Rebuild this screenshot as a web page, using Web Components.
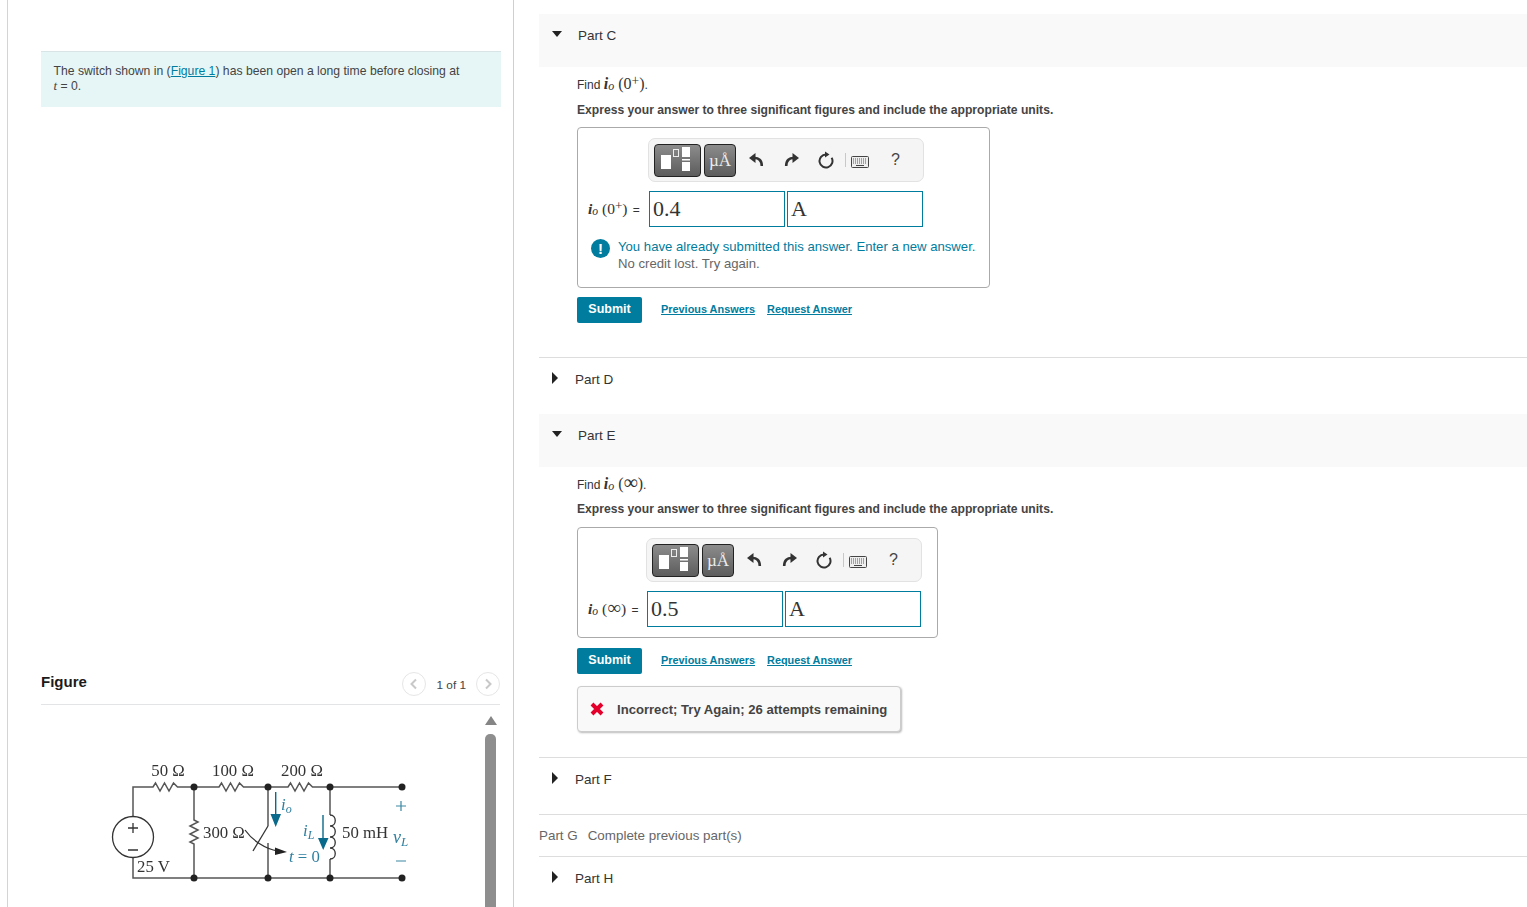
<!DOCTYPE html>
<html>
<head>
<meta charset="utf-8">
<title>Part C</title>
<style>
    html, body {
        margin: 0;
        padding: 0;
        height: 907px;
        overflow: hidden;
        background: #fff;
        font-family: "Liberation Sans", Arial, sans-serif;
        color: #333;
    }
    .page {
        display: flex;
        height: 907px;
    }
</style>
</head>
<body>
<div class="page">
    <left-pane></left-pane>
    <right-pane>
        <part-section label="Part C" style="--body-top:5px">
            <find-line><math-expr base="i" sub="o" arg="0" sup="+"></math-expr>.</find-line>
            <answer-box label-width="61px" arg="0" sup="+" value="0.4" units="A" style="--box-width:413px">
                <feedback-note></feedback-note>
            </answer-box>
            <submit-row style="--row-top:9px;--row-bottom:34px"></submit-row>
        </part-section>
        <collapsed-part label="Part D"></collapsed-part>
        <part-section label="Part E" style="--body-top:4px;--find-h:26px;--hint-top:3px">
            <find-line><math-expr base="i" sub="o" arg="∞"></math-expr>.</find-line>
            <answer-box label-width="59px" arg="∞" value="0.5" units="A" style="--box-width:361px;--box-bottom:10px;--box-top:10px"></answer-box>
            <submit-row style="--row-top:10px;--row-bottom:12px"></submit-row>
            <result-note>Incorrect; Try Again; 26 attempts remaining</result-note>
        </part-section>
        <collapsed-part label="Part F"></collapsed-part>
        <locked-part label="Part G">Complete previous part(s)</locked-part>
        <collapsed-part label="Part H"></collapsed-part>
    </right-pane>
</div>

<script>
class LeftPane extends HTMLElement {
    constructor() {
        super();
        this.attachShadow({ mode: "open" }).innerHTML = `
        <style>
            :host {
                display: block;
                box-sizing: border-box;
                width: 507px;
                height: 907px;
                margin-left: 7px;
                border-left: 1px solid #d4d4d4;
                border-right: 1px solid #cfcfcf;
                overflow: hidden;
                flex: none;
            }
            .intro {
                margin: 51px 12px 0 33px;
                height: 56px;
                box-sizing: border-box;
                padding: 12px 12px 0 12.5px;
                background: #e6f6f7;
                border-top: 1px solid #d9e4e6;
                font-size: 12.2px;
                line-height: 15px;
                color: #444;
            }
            .intro a {
                color: #007c9e;
            }
            .intro i {
                font-family: "Liberation Serif", serif;
                font-size: 13px;
                line-height: 10px;
            }
            figure-panel {
                margin-top: 560px;
            }
        </style>
        <div class="intro">The switch shown in (<a href="#">Figure 1</a>) has been open a long time before closing at<br><i>t</i> = 0.</div>
        <figure-panel></figure-panel>`;
    }
}

class FigurePanel extends HTMLElement {
    constructor() {
        super();
        this.attachShadow({ mode: "open" }).innerHTML = `
        <style>
            :host {
                display: block;
                box-sizing: border-box;
                height: 240px;
                padding: 0 13px 0 33px;
                border-right: 1px solid #bcd0e4;
                margin-right: -1px;
            }
            .head {
                display: flex;
                align-items: center;
                height: 37px;
                border-bottom: 1px solid #e2e4e6;
            }
            h2 {
                flex: 1;
                margin: -7px 0 0;
                font-size: 15px;
                line-height: 20px;
                color: #1b1b1b;
            }
            .count {
                font-size: 11.8px;
                color: #444;
                margin: 0 10px;
                position: relative;
                top: -1px;
            }
            .pager {
                box-sizing: border-box;
                width: 24px;
                height: 24px;
                border: 1px solid #e6e6e6;
                border-radius: 50%;
                display: flex;
                align-items: center;
                justify-content: center;
                position: relative;
                top: -2px;
            }
            .pager svg {
                width: 10px;
                height: 12px;
            }
            .body {
                display: flex;
                justify-content: space-between;
            }
            .circuit {
                margin: 45px 0 0 59px;
                width: 320px;
                height: 150px;
                filter: blur(.3px);
            }
            .scroll {
                width: 13px;
                margin-right: 3px;
                display: flex;
                flex-direction: column;
                align-items: center;
            }
            .arrow {
                width: 0;
                height: 0;
                margin-top: 11px;
                border: 6.5px solid transparent;
                border-top: 0;
                border-bottom: 9px solid #858585;
            }
            .thumb {
                width: 11px;
                height: 300px;
                margin-top: 9px;
                border-radius: 5px;
                background: #8e8e8e;
            }
            text {
                font-family: "Liberation Serif", serif;
                font-size: 16.8px;
                fill: #333;
            }
            text.teal {
                fill: #2f7f9f;
            }
            .wire {
                fill: none;
                stroke: #555;
                stroke-width: 1.5;
            }
            .dark {
                fill: none;
                stroke: #333;
                stroke-width: 1.3;
            }
            .dot {
                fill: #222;
            }
            .tealfill {
                fill: #0a6a8c;
            }
            .tealline {
                stroke: #0a6a8c;
                stroke-width: 1.4;
            }
        </style>
        <div class="head">
            <h2>Figure</h2>
            <span class="pager"><svg viewBox="0 0 10 12"><path d="M7 1.500 2.500 6 7 10.500" fill="none" stroke="#c8c8c8" stroke-width="2"/></svg></span>
            <span class="count">1 of 1</span>
            <span class="pager"><svg viewBox="0 0 10 12"><path d="M3 1.500 7.500 6 3 10.500" fill="none" stroke="#c8c8c8" stroke-width="2"/></svg></span>
        </div>
        <div class="body">
            <svg class="circuit" viewBox="0 0 320 150">
                <path class="wire" d="M33 66V37H53l2.500-4 4.500 8 4.500-8 4.500 8 4.500-8 4 4H94M94 37H119l2.500-4 4.500 8 4.500-8 4.500 8 4.500-8 4 4H168M168 37H188l2.500-4 4.500 8 4.500-8 4.500 8 4.500-8 4 4H302"/>
                <path class="wire" d="M33 108V128H302M94 37V70l4 2-8 4 8 4-8 4 8 4-8 4 4 2V128M168 37V76M168 93V128M230 37V65M230 109V128"/>
                <circle class="dark" cx="33" cy="87" r="20.500"/>
                <path class="dark" d="M28 78H38M33 73V83M28 100H38"/>
                <path class="dark" d="M230 65c7 0 7 11 0 11 7 0 7 11 0 11 7 0 7 11 0 11 7 0 7 11 0 11"/>
                <path class="dark" d="M168 76 153 101"/>
                <path class="dark" d="M145 80C152 90 165 99 178 101"/>
                <path class="dot" d="M175 97.500 187 102 175 105z"/>
                <path class="tealline" d="M175.700 42V66M223 65V90"/>
                <path class="tealfill" d="M170.500 64H181L175.700 77zM218 88H228.500L223.200 100z"/>
                <g class="dot">
                    <circle cx="94" cy="37" r="3.500"/><circle cx="168" cy="37" r="3.500"/><circle cx="230" cy="37" r="3.500"/><circle cx="302" cy="37" r="3.500"/>
                    <circle cx="94" cy="128" r="3.500"/><circle cx="168" cy="128" r="3.500"/><circle cx="230" cy="128" r="3.500"/><circle cx="302" cy="128" r="3.500"/>
                </g>
                <text x="68" y="26" text-anchor="middle">50 Ω</text>
                <text x="133" y="26" text-anchor="middle">100 Ω</text>
                <text x="202" y="26" text-anchor="middle">200 Ω</text>
                <text x="103" y="88">300 Ω</text>
                <text x="37" y="122">25 V</text>
                <text x="242" y="88">50 mH</text>
                <text class="teal" x="189" y="112"><tspan font-style="italic">t</tspan> = 0</text>
                <text class="teal" x="181" y="60" font-style="italic">i<tspan font-size="12" dy="3">o</tspan></text>
                <text class="teal" x="203" y="86" font-style="italic">i<tspan font-size="12" dy="3">L</tspan></text>
                <text class="teal" x="293" y="93" font-style="italic" style="font-size:18px">v<tspan style="font-size:13px" dy="3">L</tspan></text>
                <path class="tealline" d="M296 56H306M301 51V61M296 111H306" style="stroke-width:1.200;stroke:#3c87a3"/>
            </svg>
            <div class="scroll">
                <div class="arrow"></div>
                <div class="thumb"></div>
            </div>
        </div>`;
    }
}

class RightPane extends HTMLElement {
    constructor() {
        super();
        this.attachShadow({ mode: "open" }).innerHTML = `
        <style>
            :host {
                display: block;
                flex: 1;
                min-width: 0;
                padding: 14px 0 0 25px;
                height: 907px;
                box-sizing: border-box;
                overflow: hidden;
            }
        </style>
        <slot></slot>`;
    }
}

class PartSection extends HTMLElement {
    constructor() {
        super();
        this.attachShadow({ mode: "open" }).innerHTML = `
        <style>
            :host {
                display: block;
            }
            .head {
                height: 53px;
                background: #f9f9f9;
                box-sizing: border-box;
                display: flex;
                align-items: flex-start;
                padding: 14px 0 0 13px;
                font-size: 13.5px;
                line-height: 16px;
                color: #333;
            }
            .caret {
                width: 0;
                height: 0;
                margin: 3px 16px 0 0;
                border: 5px solid transparent;
                border-bottom: 0;
                border-top: 6px solid #222;
            }
            .body {
                padding: var(--body-top, 6px) 0 0 38px;
            }
        </style>
        <div class="head"><span class="caret"></span><span class="name"></span></div>
        <div class="body"><slot></slot></div>`;
    }

    connectedCallback() {
        this.shadowRoot.querySelector(".name").textContent = this.getAttribute("label");
    }
}

class MathExpr extends HTMLElement {
    constructor() {
        super();
        this.attachShadow({ mode: "open" });
    }

    connectedCallback() {
        const sup = this.getAttribute("sup");
        const arg = this.getAttribute("arg");
        this.shadowRoot.innerHTML = `
        <style>
            :host {
                display: inline;
                font-family: "Liberation Serif", serif;
                font-size: var(--math-size, 16px);
                color: #333;
            }
            i {
                font-weight: bold;
            }
            .sb, .sp {
                line-height: 0;
            }
            .sb {
                font-size: 75%;
                font-weight: normal;
                vertical-align: -1px;
            }
            .sp {
                font-size: 85%;
                vertical-align: 4px;
            }
            .wide {
                font-size: 125%;
                line-height: 0;
            }
        </style>
        <i>${this.getAttribute("base")}<span class="sb">${this.getAttribute("sub")}</span></i> (<span class="${arg === "∞" ? "wide" : ""}">${arg}</span>${sup ? `<span class="sp">${sup}</span>` : ""})`;
    }
}

class FindLine extends HTMLElement {
    constructor() {
        super();
        this.attachShadow({ mode: "open" }).innerHTML = `
        <style>
            :host {
                display: block;
                font-size: 12px;
                line-height: var(--find-h, 24px);
                color: #333;
            }
            .hint {
                margin-top: var(--hint-top, 5px);
                font-weight: bold;
                font-size: 12.15px;
                line-height: 16px;
                color: #444;
            }
        </style>
        Find <slot></slot>
        <div class="hint">Express your answer to three significant figures and include the appropriate units.</div>`;
    }
}

class MathToolbar extends HTMLElement {
    constructor() {
        super();
        this.attachShadow({ mode: "open" }).innerHTML = `
        <style>
            :host {
                display: flex;
                align-items: center;
                box-sizing: border-box;
                width: 276px;
                height: 44px;
                margin-left: -1px;
                padding: 0 0 0 5px;
                background: #f5f5f5;
                border: 1px solid #e2e2e2;
                border-radius: 7px;
            }
            .btn {
                box-sizing: border-box;
                height: 33px;
                border: 1px solid #222;
                border-radius: 4px;
                background: linear-gradient(#8c8c8c, #5c5c5c);
                flex: none;
            }
            .tpl {
                width: 47px;
                margin-right: 3px;
            }
            .tpl svg {
                display: block;
            }
            .units {
                width: 32px;
                color: #ececec;
                font: 17px/31px "Liberation Serif", serif;
                text-align: center;
            }
            .tool {
                flex: none;
                display: block;
            }
            .qm {
                margin-left: 22px;
                font-size: 16px;
                color: #444;
            }
        </style>
        <div class="btn tpl">
            <svg width="45" height="31" viewBox="0 0 45 31">
                <rect x="6" y="10" width="10" height="14" fill="#fff"/>
                <rect x="18.500" y="4.500" width="5" height="7" fill="none" stroke="#eee"/>
                <rect x="27" y="2" width="8" height="10" fill="#fff"/>
                <rect x="27" y="14" width="8" height="1.500" fill="#fff"/>
                <rect x="27" y="17" width="8" height="9" fill="#fff"/>
            </svg>
        </div>
        <div class="btn units">µÅ</div>
        <svg class="tool" style="margin-left:12px" width="16" height="16" viewBox="0 0 16 16"><path d="M7.500 1 1 6 7.500 11z" fill="#333"/><path d="M6 6C10.500 5.800 13.800 8 13.800 14" fill="none" stroke="#333" stroke-width="2.600"/></svg>
        <svg class="tool" style="margin-left:20px" width="16" height="16" viewBox="0 0 16 16"><path d="M8.500 1 15 6 8.500 11z" fill="#333"/><path d="M10 6C5.500 5.800 2.200 8 2.200 14" fill="none" stroke="#333" stroke-width="2.600"/></svg>
        <svg class="tool" style="margin-left:17px" width="18" height="18" viewBox="0 0 18 18"><path d="M9 3.500A6.500 6.500 0 1 0 14.600 6.700" fill="none" stroke="#333" stroke-width="2"/><path d="M8 .5 12.500 3.500 8 6.500z" fill="#333"/></svg>
        <svg class="tool" style="margin-left:10px" width="1" height="14" viewBox="0 0 1 14"><rect width="1" height="14" fill="#c8c8c8"/></svg>
        <svg class="tool" style="margin:3px 0 0 5px" width="18" height="12" viewBox="0 0 18 12"><rect x=".5" y=".5" width="17" height="11" rx="1" fill="#eee" stroke="#444"/><path d="M2 3H16M2 5H16M2 7H16" stroke="#555" stroke-dasharray="1 1" fill="none"/><path d="M5 9.500H13" stroke="#444"/></svg>
        <span class="qm">?</span>`;
    }
}

class AnswerBox extends HTMLElement {
    constructor() {
        super();
        this.attachShadow({ mode: "open" });
    }

    connectedCallback() {
        const sup = this.getAttribute("sup") || "";
        this.shadowRoot.innerHTML = `
        <style>
            :host {
                display: block;
                box-sizing: border-box;
                width: var(--box-width, 413px);
                margin-top: var(--box-top, 9px);
                padding: 10px 10px var(--box-bottom, 15px);
                border: 1px solid #aaa;
                border-radius: 4px;
                --math-size: 15.5px;
            }
            .grid {
                display: grid;
                grid-template-columns: ${this.getAttribute("label-width")} auto;
                row-gap: 9px;
                justify-content: start;
            }
            .label {
                align-self: center;
                font-size: 12px;
                white-space: nowrap;
            }
            .eq {
                margin-left: 2px;
            }
            .inputs {
                display: flex;
                gap: 2px;
            }
            .inputs div {
                box-sizing: border-box;
                width: 136px;
                height: 36px;
                border: 1px solid #007c9e;
                padding-left: 3px;
                font: 22px/34px "Liberation Serif", serif;
                color: #333;
            }
        </style>
        <div class="grid">
            <span></span>
            <math-toolbar></math-toolbar>
            <span class="label"><math-expr base="i" sub="o" arg="${this.getAttribute("arg")}" sup="${sup}"></math-expr> <span class="eq">=</span></span>
            <div class="inputs"><div>${this.getAttribute("value")}</div><div>${this.getAttribute("units")}</div></div>
        </div>
        <slot></slot>`;
    }
}

class FeedbackNote extends HTMLElement {
    constructor() {
        super();
        this.attachShadow({ mode: "open" }).innerHTML = `
        <style>
            :host {
                display: flex;
                margin: 11px 0 0 3px;
                font-size: 13.15px;
                line-height: 17px;
                color: #666;
            }
            .icon {
                flex: none;
                box-sizing: border-box;
                width: 19px;
                height: 19px;
                margin: 1px 8px 0 0;
                border-radius: 50%;
                background: #007c9e;
                color: #fff;
                font-size: 15px;
                line-height: 19px;
                font-weight: bold;
                text-align: center;
            }
            .msg {
                color: #007c9e;
                display: block;
            }
        </style>
        <span class="icon">!</span>
        <span><span class="msg">You have already submitted this answer. Enter a new answer.</span>No credit lost. Try again.</span>`;
    }
}

class SubmitRow extends HTMLElement {
    constructor() {
        super();
        this.attachShadow({ mode: "open" }).innerHTML = `
        <style>
            :host {
                display: flex;
                align-items: center;
                margin: var(--row-top, 9px) 0 var(--row-bottom, 34px);
            }
            button {
                box-sizing: border-box;
                width: 65px;
                height: 26px;
                padding: 0 0 2px;
                border: 0;
                border-radius: 2px;
                background: #007c9e;
                color: #fff;
                font: bold 12.5px "Liberation Sans", sans-serif;
            }
            a {
                font-size: 10.9px;
                font-weight: bold;
                color: #007c9e;
                margin-bottom: 2px;
            }
            a.prev {
                margin: 0 12px 2px 19px;
            }
        </style>
        <button type="button">Submit</button>
        <a class="prev" href="#">Previous Answers</a>
        <a href="#">Request Answer</a>`;
    }
}

class ResultNote extends HTMLElement {
    constructor() {
        super();
        this.attachShadow({ mode: "open" }).innerHTML = `
        <style>
            :host {
                display: flex;
                align-items: center;
                box-sizing: border-box;
                width: 324px;
                height: 46px;
                margin-bottom: 25px;
                padding-left: 12px;
                background: #f9f9f9;
                border: 1px solid #ccc;
                border-radius: 4px;
                box-shadow: 1px 1px 2px #bbb;
                font-size: 13.1px;
                font-weight: bold;
                color: #444;
            }
            svg {
                flex: none;
                margin-right: 13px;
            }
        </style>
        <svg width="14" height="14" viewBox="0 0 14 14"><path d="M2 2 12 12M12 2 2 12" stroke="#e4002b" stroke-width="4"/></svg>
        <slot></slot>`;
    }
}

class CollapsedPart extends HTMLElement {
    constructor() {
        super();
        this.attachShadow({ mode: "open" }).innerHTML = `
        <style>
            :host {
                display: block;
                box-sizing: border-box;
                height: 57px;
                border-top: 1px solid #ddd;
                padding: 14px 0 0 13px;
                font-size: 13.5px;
                line-height: 16px;
                color: #333;
            }
            .row {
                display: flex;
                align-items: flex-start;
            }
            .caret {
                width: 0;
                height: 0;
                margin: 0 17px 0 0;
                border: 6px solid transparent;
                border-right: 0;
                border-left: 6px solid #222;
            }
        </style>
        <div class="row"><span class="caret"></span><span class="name"></span></div>`;
    }

    connectedCallback() {
        this.shadowRoot.querySelector(".name").textContent = this.getAttribute("label");
    }
}

class LockedPart extends HTMLElement {
    constructor() {
        super();
        this.attachShadow({ mode: "open" }).innerHTML = `
        <style>
            :host {
                display: block;
                box-sizing: border-box;
                height: 42px;
                border-top: 1px solid #ddd;
                padding-top: 13px;
                font-size: 13.4px;
                line-height: 16px;
                color: #666;
            }
            .name {
                margin-right: 10px;
            }
        </style>
        <span class="name"></span><slot></slot>`;
    }

    connectedCallback() {
        this.shadowRoot.querySelector(".name").textContent = this.getAttribute("label");
    }
}

customElements.define("math-expr", MathExpr);
customElements.define("math-toolbar", MathToolbar);
customElements.define("find-line", FindLine);
customElements.define("feedback-note", FeedbackNote);
customElements.define("answer-box", AnswerBox);
customElements.define("submit-row", SubmitRow);
customElements.define("result-note", ResultNote);
customElements.define("part-section", PartSection);
customElements.define("collapsed-part", CollapsedPart);
customElements.define("locked-part", LockedPart);
customElements.define("figure-panel", FigurePanel);
customElements.define("left-pane", LeftPane);
customElements.define("right-pane", RightPane);
</script>
</body>
</html>
